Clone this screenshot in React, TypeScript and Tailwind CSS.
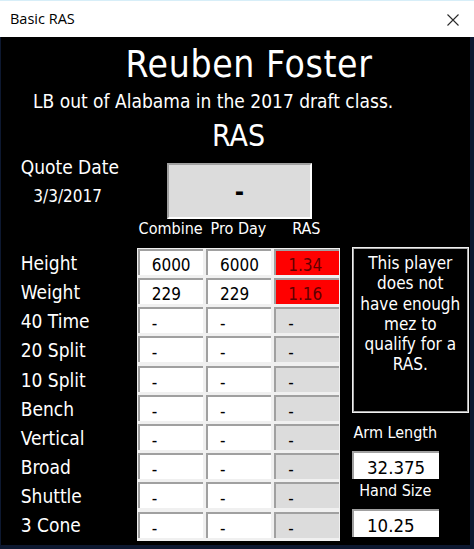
import React from 'react';

const FONT = "font-['DejaVu_Sans_Condensed','DejaVu_Sans',sans-serif]";

type Cell = { text: string; kind: 'input' | 'ras' | 'red' };

const rows: { label: string; cells: Cell[] }[] = [
  { label: 'Height', cells: [{ text: '6000', kind: 'input' }, { text: '6000', kind: 'input' }, { text: '1.34', kind: 'red' }] },
  { label: 'Weight', cells: [{ text: '229', kind: 'input' }, { text: '229', kind: 'input' }, { text: '1.16', kind: 'red' }] },
  ...['40 Time', '20 Split', '10 Split', 'Bench', 'Vertical', 'Broad', 'Shuttle', '3 Cone'].map((label) => ({
    label,
    cells: [
      { text: '-', kind: 'input' as const },
      { text: '-', kind: 'input' as const },
      { text: '-', kind: 'ras' as const },
    ],
  })),
];

function GridCell({ cell }: { cell: Cell }) {
  const bg =
    cell.kind === 'red' ? 'bg-[#ff0000] text-[#5e0000]' : cell.kind === 'ras' ? 'bg-[#dcdcdc] text-black' : 'bg-white text-black';
  return (
    <div
      className={`h-[26px] w-[65px] border-t-2 border-l-2 border-[#a0a0a0] pl-[12px] pt-[3px] text-[17px] leading-[23px] ${bg}`}
    >
      {cell.text}
    </div>
  );
}

function TextBox({ value }: { value: string }) {
  return (
    <div className="h-[28.3px] w-[86.6px] bg-white border-t-2 border-l-2 border-[#a0a0a0] pl-[13px] pt-[4px] text-[18.5px] leading-[22px] text-black">
      {value}
    </div>
  );
}

export default function App() {
  return (
    <div className={`w-[474px] h-[549px] flex flex-col overflow-hidden ${FONT}`}>
      {/* Window title bar */}
      <div className="h-[37px] shrink-0 bg-white border-t border-[#d7eef8] flex items-center justify-between pl-[10px] pr-[15px]">
        <span className="font-['Open_Sans',sans-serif] text-[14.5px] text-black leading-none">Basic RAS</span>
        <svg width="12" height="12" viewBox="0 0 12 12" className="mt-[1px]">
          <path d="M0.5 0.5 L11.5 11.5 M11.5 0.5 L0.5 11.5" stroke="#2a2a2a" strokeWidth="1.1" fill="none" />
        </svg>
      </div>

      {/* Form body */}
      <div className="flex-1 bg-black border-l border-r-4 border-b-4 border-[#0d1830] text-white">
        <div className="mt-[7px] pl-[27px] text-center text-[37px] leading-[41px] tracking-[0.6px]">Reuben Foster</div>
        <div className="mt-[5px] pl-[32px] text-[19px] leading-[22px]">LB out of Alabama in the 2017 draft class.</div>
        <div className="mt-[7.5px] pl-[6px] text-center text-[30px] leading-[32px]">RAS</div>

        <div className="flex">
          {/* Labels column */}
          <div className="w-[135.7px] shrink-0">
            <div className="mt-[4px] pl-[19.7px] text-[19px] leading-[22px]">Quote Date</div>
            <div className="mt-[8.7px] pl-[32.3px] text-[17px] leading-[20px]">3/3/2017</div>
            <div className="mt-[42.6px] flex flex-col">
              {rows.map((r) => (
                <div key={r.label} className="h-[29.2px] pl-[19.7px] text-[19px] leading-[28px] whitespace-nowrap">
                  {r.label}
                </div>
              ))}
            </div>
          </div>

          {/* Scores column */}
          <div className="w-[203.6px] shrink-0">
            <div className="mt-[11.7px] ml-[30px] w-[145.6px] h-[56px] bg-[#dcdcdc] border-2 border-t-[#a0a0a0] border-l-[#a0a0a0] border-r-white border-b-white flex items-center justify-center text-black text-[25px] font-bold leading-none">
              -
            </div>
            <div className="mt-[0.5px] grid grid-cols-3 text-center text-[16px] leading-[18px]">
              <span>Combine</span>
              <span>Pro Day</span>
              <span>RAS</span>
            </div>
            <div className="mt-[10.2px] bg-[#f0f0f0] p-[1px] pb-[3px] flex flex-col gap-[3.2px]">
              {rows.map((r) => (
                <div key={r.label} className="flex gap-[3.3px]">
                  {r.cells.map((c, i) => (
                    <GridCell key={i} cell={c} />
                  ))}
                </div>
              ))}
            </div>
          </div>

          {/* Right panel */}
          <div className="ml-[11.7px] w-[116.6px] shrink-0">
            <div className="mt-[95.7px] h-[165.4px] border border-[#f0f0f0]">
              <div className="h-full border border-[#a8a8a8] pt-[4px] text-center text-[17px] leading-[20.2px]">
                This player
                <br />
                does not
                <br />
                have enough
                <br />
                mez to
                <br />
                qualify for a
                <br />
                RAS.
              </div>
            </div>
            <div className="mt-[11.1px] w-[86.6px] text-center text-[16px] leading-[18px] whitespace-nowrap">Arm Length</div>
            <div className="mt-[9.2px]">
              <TextBox value="32.375" />
            </div>
            <div className="mt-[2.9px] w-[86.6px] text-center text-[16px] leading-[18px] whitespace-nowrap">Hand Size</div>
            <div className="mt-[9.1px]">
              <TextBox value="10.25" />
            </div>
          </div>
        </div>
      </div>
    </div>
  );
}
